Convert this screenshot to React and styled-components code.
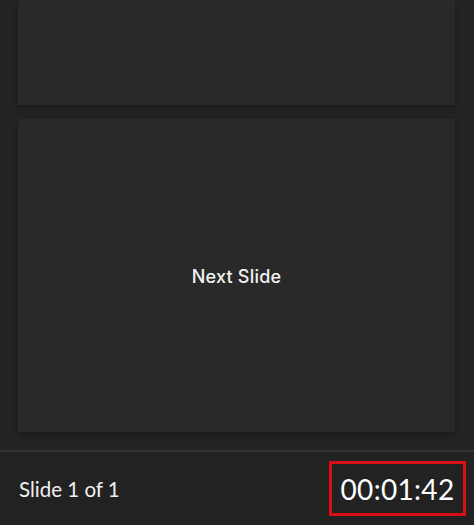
import React from "react";
import styled, { createGlobalStyle } from "styled-components";

const GlobalStyle = createGlobalStyle`
  html, body {
    margin: 0;
    padding: 0;
    background: #222222;
  }
  #root {
    height: 525px;
    overflow: hidden;
  }
`;

function App() {
  return (
    <>
      <GlobalStyle />
      <Screen>
        <SlideArea>
          <SlideCard $height={105} />
          <SlideCard $height={313}>
            <SlideLabel>Next Slide</SlideLabel>
          </SlideCard>
        </SlideArea>
        <Footer>
          <Counter>Slide 1 of 1</Counter>
          <Timer>00:01:42</Timer>
        </Footer>
      </Screen>
    </>
  );
}

const Screen = styled.div`
  width: 474px;
  height: 525px;
  display: flex;
  flex-direction: column;
  background: #222222;
`;

const SlideArea = styled.div`
  display: flex;
  flex-direction: column;
  gap: 14px;
  padding: 0 19px 18px 18px;
  background: #232323;
`;

const SlideCard = styled.div`
  height: ${(p) => p.$height}px;
  background: #292929;
  display: flex;
  align-items: center;
  justify-content: center;
  box-shadow: 0 3px 6px rgba(0, 0, 0, 0.28);
`;

const SlideLabel = styled.div`
  font-family: "Inter", "Noto Sans", sans-serif;
  font-weight: 500;
  font-size: 18px;
  letter-spacing: 0.2px;
  color: #f2f2f2;
  margin-top: 2px;
`;

const Footer = styled.div`
  flex: 1;
  display: flex;
  align-items: center;
  justify-content: space-between;
  padding: 0 8px 0 19px;
  border-top: 2px solid #333333;
  background: #222222;
`;

const Counter = styled.div`
  font-family: "Lato", "Noto Sans", sans-serif;
  font-size: 20.5px;
  color: #f0f0f0;
`;

const Timer = styled.div`
  box-sizing: border-box;
  width: 137px;
  height: 55px;
  border: 3px solid #d80f16;
  display: flex;
  align-items: center;
  justify-content: center;
  font-family: "Lato", "Noto Sans", sans-serif;
  font-size: 28px;
  color: #ffffff;
  letter-spacing: 0.3px;
`;

export default App;
